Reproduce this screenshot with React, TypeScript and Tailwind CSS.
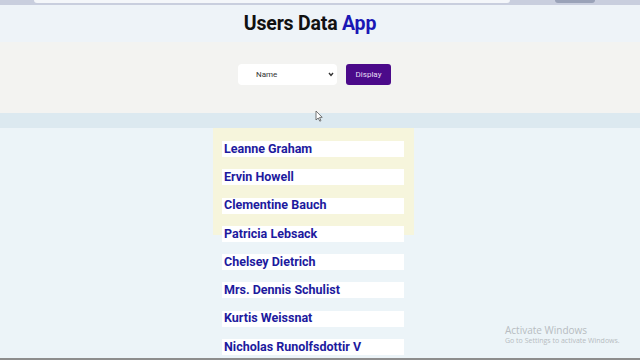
import { useState } from 'react';

const USERS = [
  'Leanne Graham',
  'Ervin Howell',
  'Clementine Bauch',
  'Patricia Lebsack',
  'Chelsey Dietrich',
  'Mrs. Dennis Schulist',
  'Kurtis Weissnat',
  'Nicholas Runolfsdottir V',
];

function App() {
  const [field, setField] = useState('name');

  return (
    <div className="relative h-[360px] w-[640px] overflow-hidden bg-[#ecf4f8] font-['Roboto',sans-serif]">
      {/* browser chrome edge */}
      <div className="flex h-[5px] items-start bg-[#c9cede]">
        <div className="ml-[34px] h-[3px] w-[476px] rounded-b-sm bg-[#f4f6fa]"></div>
        <div className="ml-auto mr-[45px] h-[3px] w-[40px] rounded-b bg-[#9aa2b8]"></div>
      </div>

      <header className="flex h-[37px] items-center justify-center bg-[#eef3f8] pr-[20px]">
        <h1 className="text-[19.5px] font-bold leading-none tracking-[-0.2px] text-[#111]">
          Users Data <span className="text-[#1a17b5]">App</span>
        </h1>
      </header>

      <section className="flex h-[71px] items-start justify-center gap-[9px] bg-[#f3f3f1] pr-[11px] pt-[22px]">
        <div className="relative flex h-[21px] w-[99px] items-center rounded-sm bg-white">
          <select
            value={field}
            onChange={(e) => setField(e.target.value)}
            className="h-full w-full appearance-none bg-transparent pl-[18px] text-[8px] text-[#333] outline-none"
          >
            <option value="name">Name</option>
            <option value="email">Email</option>
          </select>
          <svg className="pointer-events-none absolute right-[3px] top-[8px]" width="6" height="5" viewBox="0 0 6 5">
            <path d="M1 1 L3 3.5 L5 1" stroke="#333" strokeWidth="1.4" fill="none" />
          </svg>
        </div>
        <button className="h-[21px] w-[45px] rounded-[3px] bg-[#4b0a8a] text-[8px] text-[#e8ddf5]">
          Display
        </button>
      </section>

      <div className="h-[15px] bg-[#dce9f0]"></div>

      <main className="flex justify-center">
        <div className="ml-[-13px] h-[107px] w-[201px] bg-[#f6f5dc] pl-[9px] pt-[13px]">
          <ul className="flex w-[182px] flex-col gap-[12.3px]">
            {USERS.map((u) => (
              <li
                key={u}
                className="flex h-[16px] items-center whitespace-nowrap bg-white pl-[2px] text-[12.5px] font-bold text-[#1d1a9e]"
              >
                {u}
              </li>
            ))}
          </ul>
        </div>
      </main>

      {/* cursor */}
      <svg className="absolute left-[315px] top-[110px]" width="8" height="12" viewBox="0 0 8 12">
        <path d="M1 1 L1 10 L3.2 8 L4.8 11.2 L6 10.6 L4.5 7.5 L7.2 7.3 Z" fill="#fff" stroke="#555" strokeWidth="0.8" />
      </svg>

      {/* windows watermark */}
      <div className="absolute left-[505px] top-[324px] font-['Open_Sans',sans-serif] leading-tight text-[#b7bcc1]">
        <div className="text-[10px]">Activate Windows</div>
        <div className="text-[7px]">Go to Settings to activate Windows.</div>
      </div>

      <div className="absolute bottom-0 left-0 h-[2px] w-full bg-[#8d8d8d]"></div>
    </div>
  );
}

export default App;
